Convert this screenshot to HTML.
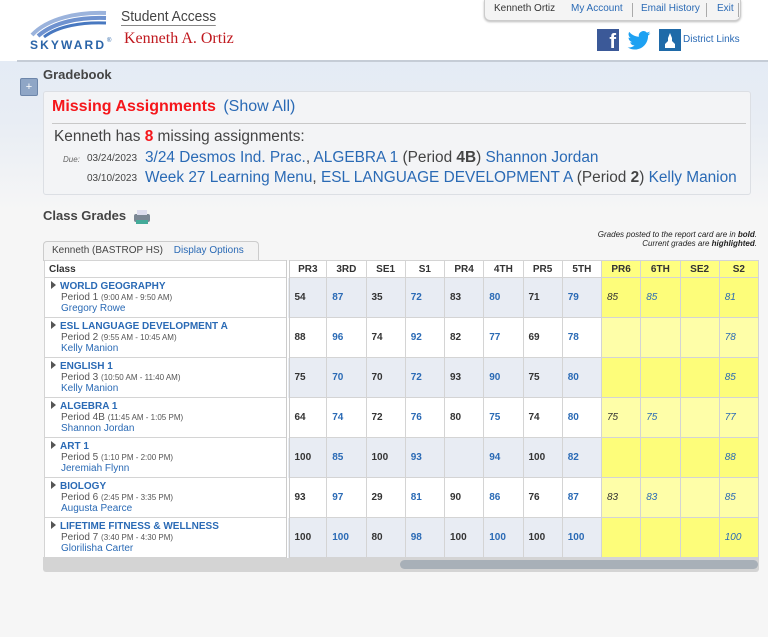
<!DOCTYPE html>
<html><head><meta charset="utf-8">
<style>
*{margin:0;padding:0;box-sizing:border-box}
body{width:768px;height:637px;overflow:hidden;font-family:"Liberation Sans",Arial,sans-serif;background:#f6f6f6;position:relative;color:#333}
.abs{position:absolute}
a{color:#2a6ab5;text-decoration:none}
#hdr{left:0;top:0;width:768px;height:61px;background:#fff}
#band{left:0;top:61px;width:768px;height:150px;background:linear-gradient(#e4ebf5,#e8edf4 40%,#f6f6f6)}
#hline{left:17px;top:60px;width:751px;height:2px;background:#c5ccd6}
#menu{left:484px;top:0;width:257px;height:21px;background:#f4f4f4;border:1px solid #ccc;border-top:none;border-radius:0 0 6px 6px;box-shadow:0 1px 2px #bbb;font-size:10px;line-height:18px}
#menu span{position:absolute;top:0}
.sep{position:absolute;top:3px;width:1px;height:14px;background:#aaa}
#missing{left:43px;top:91px;width:708px;height:104px;background:#f3f4f6;border:1px solid #dcdfe4;border-radius:3px}
table{border-collapse:collapse;position:absolute;left:44px;top:260px;table-layout:fixed}
td,th{height:40px;border:1px solid #d4d4d4;font-size:10px;font-weight:bold;padding-left:5px;text-align:left;vertical-align:middle}
th{height:17px;font-size:10px;text-align:center;padding:0;background:#fff;color:#333}
td.c{background:#fff;padding:3px 0 0 6px;vertical-align:top;border-right:4px double #ccc;font-weight:normal}
tr.o td.g{background:#e8ecf3}
tr.e td.g{background:#fff}
td.b{color:#2a6ab5}
tr.o td.y{background:#fdfd7a}
tr.e td.y{background:#fefea8}
th.y{background:#ffff80}
td.y{font-style:italic;font-weight:normal}
td.yb{color:#2a6ab5}
.cn{color:#2a6ab5;font-weight:bold;font-size:10px;line-height:11px}
.pd{color:#555;font-size:10px;margin-left:10px;line-height:11px}
.pd small{font-size:8px}
.tn{color:#2a6ab5;font-size:10px;margin-left:10px;line-height:11px}
.tri{display:inline-block;width:0;height:0;border-left:5px solid #555;border-top:4px solid transparent;border-bottom:4px solid transparent;margin-right:4px}
.ln{font-size:15.4px;color:#444;white-space:nowrap}
.dt{font-size:10px;color:#444}
</style></head><body>
<div id="hdr" class="abs"></div>
<div id="band" class="abs"></div>
<div id="hline" class="abs"></div>
<svg class="abs" style="left:28px;top:8px" width="86" height="44" viewBox="0 0 86 44">
<path d="M4 27 C20 10 50 4 78 5" stroke="#9bb3dc" stroke-width="4" fill="none"/>
<path d="M10 28 C26 14 52 9 78 10" stroke="#6f92cf" stroke-width="4" fill="none"/>
<path d="M16 29 C30 18 54 14 78 15" stroke="#4878c0" stroke-width="3" fill="none"/>
<text x="2" y="41" font-family="Liberation Sans Narrow, Liberation Sans" font-weight="bold" font-size="12" fill="#2a64a8" textLength="74" lengthAdjust="spacing">SKYWARD</text>
<text x="79" y="34" font-size="6" fill="#2a64a8">®</text>
</svg>
<div class="abs" style="left:121px;top:9px;font-size:15px;color:#444;border-bottom:1px solid #888;line-height:16px;transform:scaleX(0.92);transform-origin:left">Student Access</div>
<div class="abs" style="left:124px;top:30px;font-family:'Liberation Serif',serif;font-size:16px;color:#c0191f">Kenneth A. Ortiz</div>
<div id="menu" class="abs">
<span style="left:9px;color:#333">Kenneth Ortiz</span>
<span style="left:86px;color:#2a6ab5">My Account</span><div class="sep" style="left:147px"></div>
<span style="left:156px;color:#2a6ab5">Email History</span><div class="sep" style="left:221px"></div>
<span style="left:232px;color:#2a6ab5">Exit</span><div class="sep" style="left:253px"></div>
</div>
<div class="abs" style="left:597px;top:29px;width:22px;height:22px;background:#3b5998;color:#fff;font-weight:bold;font-size:20px;text-align:right;padding-right:3px;line-height:26px">f</div>
<svg class="abs" style="left:627px;top:31px" width="24" height="19" viewBox="0 0 24 20"><path d="M24 2.4c-.9.4-1.8.6-2.8.8 1-.6 1.8-1.6 2.2-2.7-1 .6-2 1-3.1 1.2A4.9 4.9 0 0 0 11.9 6 14 14 0 0 1 1.7.9a4.9 4.9 0 0 0 1.5 6.6c-.8 0-1.6-.2-2.2-.6 0 2.4 1.700 4.4 3.9 4.8-.7.2-1.5.2-2.2.1.6 2 2.4 3.4 4.6 3.4A9.9 9.9 0 0 1 0 17.3 14 14 0 0 0 7.5 19.5c9 0 14-7.5 14-14v-.6c1-.7 1.8-1.6 2.500-2.5z" fill="#1da1f2"/></svg>
<div class="abs" style="left:659px;top:29px;width:22px;height:22px;background:#1f6aa8"><svg width="22" height="22"><path d="M11 4 L9 9 V12 L6 15 V19 H16 V15 L13 12 V9 Z" fill="#fff"/></svg></div>
<div class="abs" style="left:683px;top:34px;font-size:10px;color:#2a6ab5">District Links</div>

<div class="abs" style="left:20px;top:78px;width:18px;height:18px;background:#8fa6c6;border:1px solid #6d86aa;border-radius:2px;color:#fff;font-size:11px;text-align:center;line-height:16px">+</div>
<div class="abs" style="left:43px;top:67px;font-size:13px;font-weight:bold;color:#444">Gradebook</div>

<div id="missing" class="abs">
<div class="abs" style="left:8px;top:6px;font-size:16px;font-weight:bold;color:#f5161b">Missing Assignments <span style="font-weight:normal;color:#2a6ab5;margin-left:3px">(Show All)</span></div>
<div class="abs" style="left:8px;top:31px;width:694px;height:1px;background:#c8c8c8"></div>
<div class="abs ln" style="left:10px;top:36px">Kenneth has <b style="color:#f5161b">8</b> missing assignments:</div>
<div class="abs" style="left:19px;top:63px;font-size:8px;font-style:italic;color:#666">Due:</div>
<div class="abs dt" style="left:43px;top:61px">03/24/2023</div>
<div class="abs ln" style="left:101px;top:57px"><a>3/24 Desmos Ind. Prac.</a>, <a>ALGEBRA 1</a> (Period <b>4B</b>) <a>Shannon Jordan</a></div>
<div class="abs dt" style="left:43px;top:81px">03/10/2023</div>
<div class="abs ln" style="left:101px;top:77px"><a>Week 27 Learning Menu</a>, <a>ESL LANGUAGE DEVELOPMENT A</a> (Period <b>2</b>) <a>Kelly Manion</a></div>
</div>

<div class="abs" style="left:43px;top:208px;font-size:13px;font-weight:bold;color:#444">Class Grades</div>
<svg class="abs" style="left:132px;top:208px" width="20" height="18"><rect x="2" y="6" width="16" height="8" rx="2" fill="#7b8794"/><rect x="5" y="2" width="10" height="5" fill="#dde"/><rect x="4" y="12" width="12" height="4" fill="#4a9"/></svg>
<div class="abs" style="right:11px;top:230px;font-size:8px;font-style:italic;text-align:right;line-height:9px;color:#222">Grades posted to the report card are in <b>bold</b>.<br>Current grades are <b>highlighted</b>.</div>
<div class="abs" style="left:43px;top:241px;width:216px;height:20px;background:#f3f3f3;border:1px solid #ccc;border-bottom:none;border-radius:4px 4px 0 0;font-size:10px;line-height:18px;padding-left:8px;color:#444">Kenneth (BASTROP HS) <span style="color:#2a6ab5;margin-left:8px">Display Options</span></div>

<div class="abs" style="left:43px;top:557px;width:716px;height:15px;background:#d4d4d4;border-radius:0 0 3px 3px"></div>
<div class="abs" style="left:400px;top:560px;width:358px;height:9px;background:#a8b0b8;border-radius:5px"></div>

<table>
<colgroup><col style="width:243px"><col span="12" style="width:39.25px"></colgroup>
<tr><th style="text-align:left;padding-left:4px;border-right:4px double #ccc">Class</th><th>PR3</th><th>3RD</th><th>SE1</th><th>S1</th><th>PR4</th><th>4TH</th><th>PR5</th><th>5TH</th><th class="y">PR6</th><th class="y">6TH</th><th class="y">SE2</th><th class="y">S2</th></tr>
<tr class="o"><td class="c"><div class="cn"><span class="tri"></span>WORLD GEOGRAPHY</div><div class="pd">Period 1 <small>(9:00 AM - 9:50 AM)</small></div><div class="tn">Gregory Rowe</div></td><td class="g">54</td><td class="g b">87</td><td class="g">35</td><td class="g b">72</td><td class="g">83</td><td class="g b">80</td><td class="g">71</td><td class="g b">79</td><td class="y">85</td><td class="y yb">85</td><td class="y"></td><td class="y yb">81</td></tr>
<tr class="e"><td class="c"><div class="cn"><span class="tri"></span>ESL LANGUAGE DEVELOPMENT A</div><div class="pd">Period 2 <small>(9:55 AM - 10:45 AM)</small></div><div class="tn">Kelly Manion</div></td><td class="g">88</td><td class="g b">96</td><td class="g">74</td><td class="g b">92</td><td class="g">82</td><td class="g b">77</td><td class="g">69</td><td class="g b">78</td><td class="y"></td><td class="y"></td><td class="y"></td><td class="y yb">78</td></tr>
<tr class="o"><td class="c"><div class="cn"><span class="tri"></span>ENGLISH 1</div><div class="pd">Period 3 <small>(10:50 AM - 11:40 AM)</small></div><div class="tn">Kelly Manion</div></td><td class="g">75</td><td class="g b">70</td><td class="g">70</td><td class="g b">72</td><td class="g">93</td><td class="g b">90</td><td class="g">75</td><td class="g b">80</td><td class="y"></td><td class="y"></td><td class="y"></td><td class="y yb">85</td></tr>
<tr class="e"><td class="c"><div class="cn"><span class="tri"></span>ALGEBRA 1</div><div class="pd">Period 4B <small>(11:45 AM - 1:05 PM)</small></div><div class="tn">Shannon Jordan</div></td><td class="g">64</td><td class="g b">74</td><td class="g">72</td><td class="g b">76</td><td class="g">80</td><td class="g b">75</td><td class="g">74</td><td class="g b">80</td><td class="y">75</td><td class="y yb">75</td><td class="y"></td><td class="y yb">77</td></tr>
<tr class="o"><td class="c"><div class="cn"><span class="tri"></span>ART 1</div><div class="pd">Period 5 <small>(1:10 PM - 2:00 PM)</small></div><div class="tn">Jeremiah Flynn</div></td><td class="g">100</td><td class="g b">85</td><td class="g">100</td><td class="g b">93</td><td class="g"></td><td class="g b">94</td><td class="g">100</td><td class="g b">82</td><td class="y"></td><td class="y"></td><td class="y"></td><td class="y yb">88</td></tr>
<tr class="e"><td class="c"><div class="cn"><span class="tri"></span>BIOLOGY</div><div class="pd">Period 6 <small>(2:45 PM - 3:35 PM)</small></div><div class="tn">Augusta Pearce</div></td><td class="g">93</td><td class="g b">97</td><td class="g">29</td><td class="g b">81</td><td class="g">90</td><td class="g b">86</td><td class="g">76</td><td class="g b">87</td><td class="y">83</td><td class="y yb">83</td><td class="y"></td><td class="y yb">85</td></tr>
<tr class="o"><td class="c"><div class="cn"><span class="tri"></span>LIFETIME FITNESS &amp; WELLNESS</div><div class="pd">Period 7 <small>(3:40 PM - 4:30 PM)</small></div><div class="tn">Glorilisha Carter</div></td><td class="g">100</td><td class="g b">100</td><td class="g">80</td><td class="g b">98</td><td class="g">100</td><td class="g b">100</td><td class="g">100</td><td class="g b">100</td><td class="y"></td><td class="y"></td><td class="y"></td><td class="y yb">100</td></tr>
</table>
</body></html>
